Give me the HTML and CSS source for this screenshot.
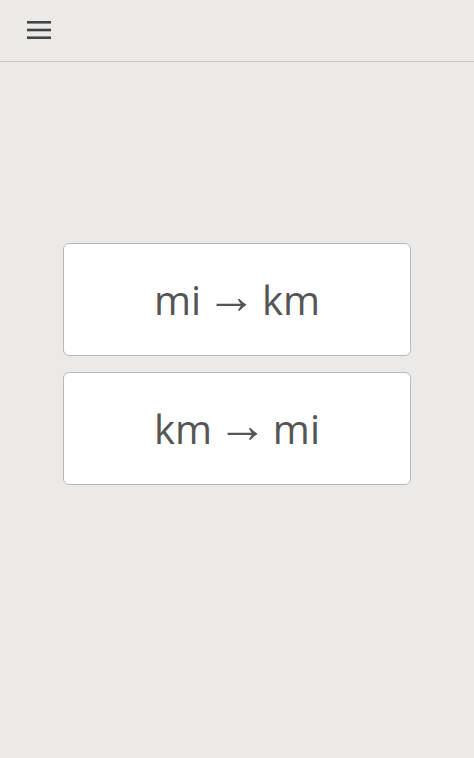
FILE: index.html
```html
<!DOCTYPE html>
<html>
<head>
<meta charset="utf-8">
<link rel="stylesheet" href="styles.css">
</head>
<body>
<header class="topbar">
  <button class="menu" aria-label="Menu">
    <svg width="26" height="20" viewBox="0 0 26 20">
      <rect x="1" y="1" width="24" height="2.6" fill="#444"/>
      <rect x="1" y="8.7" width="24" height="2.6" fill="#444"/>
      <rect x="1" y="16.4" width="24" height="2.6" fill="#444"/>
    </svg>
  </button>
</header>
<main class="content">
  <button class="choice">mi <span class="arrow">→</span> km</button>
  <button class="choice">km <span class="arrow">→</span> mi</button>
</main>
</body>
</html>
```
FILE: styles.css
```css
html, body {
  margin: 0;
  padding: 0;
  background: #ebeae8;
  font-family: "Open Sans", "Noto Sans", sans-serif;
}
.topbar {
  height: 61px;
  border-bottom: 1px solid #c9c8c6;
  display: flex;
  align-items: center;
  padding-left: 26px;
  box-sizing: content-box;
}
.menu {
  background: none;
  border: 0;
  padding: 0;
  margin: 0;
  display: flex;
  margin-top: -1px;
}
.content {
  display: flex;
  flex-direction: column;
  align-items: center;
  gap: 16px;
  padding-top: 181px;
}
.choice {
  width: 348px;
  height: 113px;
  background: #fff;
  border: 1px solid #b9b8b6;
  border-radius: 6px;
  font-family: "Open Sans", "Noto Sans", sans-serif;
  font-size: 40px;
  line-height: 56px;
  color: #555;
  padding: 0;
}
.arrow {
  font-family: "Liberation Sans", sans-serif;
  font-size: 50px;
  line-height: 0;
  margin: 0 -5px;
  position: relative;
  top: -2px;
}
```
